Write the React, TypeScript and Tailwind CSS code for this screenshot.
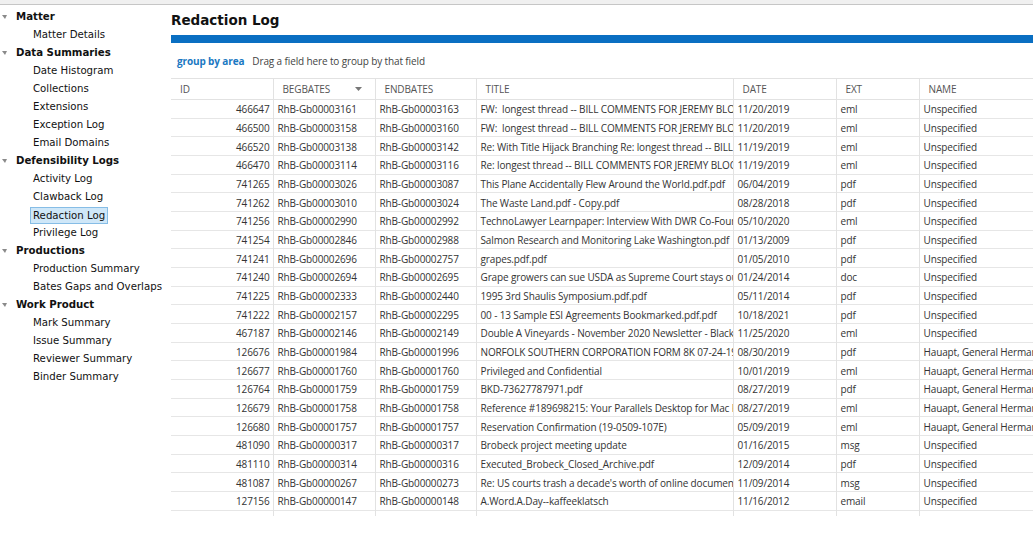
import React from 'react';

type NavGroup = { title: string; items: string[] };

const nav: NavGroup[] = [
  { title: 'Matter', items: ['Matter Details'] },
  { title: 'Data Summaries', items: ['Date Histogram', 'Collections', 'Extensions', 'Exception Log', 'Email Domains'] },
  { title: 'Defensibility Logs', items: ['Activity Log', 'Clawback Log', 'Redaction Log', 'Privilege Log'] },
  { title: 'Productions', items: ['Production Summary', 'Bates Gaps and Overlaps'] },
  { title: 'Work Product', items: ['Mark Summary', 'Issue Summary', 'Reviewer Summary', 'Binder Summary'] },
];

// id, begbates, endbates, title, date, ext, name
const rows: string[][] = [
  ['466647', 'RhB-Gb00003161', 'RhB-Gb00003163', 'FW:  longest thread -- BILL COMMENTS FOR JEREMY BLOCK', '11/20/2019', 'eml', 'Unspecified'],
  ['466500', 'RhB-Gb00003158', 'RhB-Gb00003160', 'FW:  longest thread -- BILL COMMENTS FOR JEREMY BLOCK', '11/20/2019', 'eml', 'Unspecified'],
  ['466520', 'RhB-Gb00003138', 'RhB-Gb00003142', 'Re: With Title Hijack Branching Re: longest thread -- BILL COMMENTS', '11/19/2019', 'eml', 'Unspecified'],
  ['466470', 'RhB-Gb00003114', 'RhB-Gb00003116', 'Re: longest thread -- BILL COMMENTS FOR JEREMY BLOCK', '11/19/2019', 'eml', 'Unspecified'],
  ['741265', 'RhB-Gb00003026', 'RhB-Gb00003087', 'This Plane Accidentally Flew Around the World.pdf.pdf', '06/04/2019', 'pdf', 'Unspecified'],
  ['741262', 'RhB-Gb00003010', 'RhB-Gb00003024', 'The Waste Land.pdf - Copy.pdf', '08/28/2018', 'pdf', 'Unspecified'],
  ['741256', 'RhB-Gb00002990', 'RhB-Gb00002992', 'TechnoLawyer Learnpaper: Interview With DWR Co-Founder', '05/10/2020', 'eml', 'Unspecified'],
  ['741254', 'RhB-Gb00002846', 'RhB-Gb00002988', 'Salmon Research and Monitoring Lake Washington.pdf', '01/13/2009', 'pdf', 'Unspecified'],
  ['741241', 'RhB-Gb00002696', 'RhB-Gb00002757', 'grapes.pdf.pdf', '01/05/2010', 'pdf', 'Unspecified'],
  ['741240', 'RhB-Gb00002694', 'RhB-Gb00002695', 'Grape growers can sue USDA as Supreme Court stays out', '01/24/2014', 'doc', 'Unspecified'],
  ['741225', 'RhB-Gb00002333', 'RhB-Gb00002440', '1995 3rd Shaulis Symposium.pdf.pdf', '05/11/2014', 'pdf', 'Unspecified'],
  ['741222', 'RhB-Gb00002157', 'RhB-Gb00002295', '00 - 13 Sample ESI Agreements Bookmarked.pdf.pdf', '10/18/2021', 'pdf', 'Unspecified'],
  ['467187', 'RhB-Gb00002146', 'RhB-Gb00002149', 'Double A Vineyards - November 2020 Newsletter - Black', '11/25/2020', 'eml', 'Unspecified'],
  ['126676', 'RhB-Gb00001984', 'RhB-Gb00001996', 'NORFOLK SOUTHERN CORPORATION FORM 8K 07-24-19', '08/30/2019', 'pdf', 'Hauapt, General Herman'],
  ['126677', 'RhB-Gb00001760', 'RhB-Gb00001760', 'Privileged and Confidential', '10/01/2019', 'eml', 'Hauapt, General Herman'],
  ['126764', 'RhB-Gb00001759', 'RhB-Gb00001759', 'BKD-73627787971.pdf', '08/27/2019', 'pdf', 'Hauapt, General Herman'],
  ['126679', 'RhB-Gb00001758', 'RhB-Gb00001758', 'Reference #189698215: Your Parallels Desktop for Mac Pro', '08/27/2019', 'eml', 'Hauapt, General Herman'],
  ['126680', 'RhB-Gb00001757', 'RhB-Gb00001757', 'Reservation Confirmation (19-0509-107E)', '05/09/2019', 'eml', 'Hauapt, General Herman'],
  ['481090', 'RhB-Gb00000317', 'RhB-Gb00000317', 'Brobeck project meeting update', '01/16/2015', 'msg', 'Unspecified'],
  ['481110', 'RhB-Gb00000314', 'RhB-Gb00000316', 'Executed_Brobeck_Closed_Archive.pdf', '12/09/2014', 'pdf', 'Unspecified'],
  ['481087', 'RhB-Gb00000267', 'RhB-Gb00000273', "Re: US courts trash a decade's worth of online documents", '11/09/2014', 'msg', 'Unspecified'],
  ['127156', 'RhB-Gb00000147', 'RhB-Gb00000148', 'A.Word.A.Day--kaffeeklatsch', '11/16/2012', 'email', 'Unspecified'],
];

const columns = ['ID', 'BEGBATES', 'ENDBATES', 'TITLE', 'DATE', 'EXT', 'NAME'];
const widths = ['w-[102px]', 'w-[102px]', 'w-[101px]', 'w-[257px]', 'w-[103px]', 'w-[83px]', 'w-[160px]'];

const Caret = () => (
  <svg width="6" height="6" viewBox="0 0 6 6" className="shrink-0">
    <path d="M0 1 L5 1 L3 5 Z" fill="#8a8a8a" />
  </svg>
);

const Sidebar = () => (
  <div className="w-[171px] shrink-0 pt-[3px] text-[10.2px] text-[#111] font-['DejaVu_Sans',Verdana,sans-serif]">
    {nav.map((g) => (
      <div key={g.title}>
        <div className="flex h-[18px] items-center pl-[2px]">
          <Caret />
          <span className="ml-[8px] font-bold">{g.title}</span>
        </div>
        {g.items.map((item) => (
          <div key={item} className="flex h-[18px] items-center pl-[30px]">
            {item === 'Redaction Log' ? (
              <span className="border border-[#86bde6] bg-[#cfe7f8] px-[2px] leading-[15px]">{item}</span>
            ) : (
              <span className="px-[3px]">{item}</span>
            )}
          </div>
        ))}
      </div>
    ))}
  </div>
);

export default function App() {
  return (
    <div className="w-[1033px] h-[552px] overflow-hidden bg-white">
      <div className="h-[5px] bg-[#f0f0f0] border-b border-[#c6c6c6]" />
      <div className="flex">
        <Sidebar />
        <div className="flex-1 min-w-0 overflow-hidden">
          <h1 className="mt-[5px] h-[20px] leading-[20px] text-[13.5px] font-bold text-[#111] font-['DejaVu_Sans',Verdana,sans-serif]">
            Redaction Log
          </h1>
          <div className="mt-[5px] h-[8px] bg-[#0a6fc2]" />
          <div className="font-['Open_Sans','Noto_Sans',sans-serif] text-[10px] tracking-[-0.13px]">
            <div className="mt-[9px] flex h-[18px] items-center pl-[6px] gap-[8px]">
              <span className="font-bold text-[#1a78c2]">group by area</span>
              <span className="text-[#444]">Drag a field here to group by that field</span>
            </div>
            <table className="mt-[8px] table-fixed border-collapse w-[908px] text-[#333]">
              <colgroup>
                {widths.map((w, i) => (
                  <col key={i} className={w} />
                ))}
              </colgroup>
              <thead>
                <tr className="h-[21px] border-t border-b border-[#e2e2e2]">
                  {columns.map((c, i) => (
                    <th
                      key={c}
                      className={`font-normal text-left pl-[9px] text-[#555] border-[#e2e2e2] ${i > 0 ? 'border-l' : ''}`}
                    >
                      <div className="flex items-center justify-between pr-[13px]">
                        <span>{c}</span>
                        {c === 'BEGBATES' && (
                          <svg width="7" height="4" viewBox="0 0 7 4">
                            <path d="M0 0 L7 0 L3.5 4 Z" fill="#777" />
                          </svg>
                        )}
                      </div>
                    </th>
                  ))}
                </tr>
              </thead>
              <tbody>
                {rows.map((r) => (
                  <tr key={r[0] + r[1]} className="h-[18.68px] border-b border-[#e6e6e6]">
                    {r.map((v, i) => (
                      <td
                        key={i}
                        className={`p-0 pt-[2px] overflow-hidden whitespace-pre border-[#e2e2e2] ${
                          i === 0 ? 'text-right pr-[3px]' : 'border-l pl-[4px]'
                        }`}
                      >
                        {v}
                      </td>
                    ))}
                  </tr>
                ))}
                <tr className="h-[6px]">
                  {columns.map((c, i) => (
                    <td key={c} className={`p-0 border-[#e2e2e2] ${i > 0 ? 'border-l' : ''}`} />
                  ))}
                </tr>
              </tbody>
            </table>
          </div>
        </div>
      </div>
    </div>
  );
}
